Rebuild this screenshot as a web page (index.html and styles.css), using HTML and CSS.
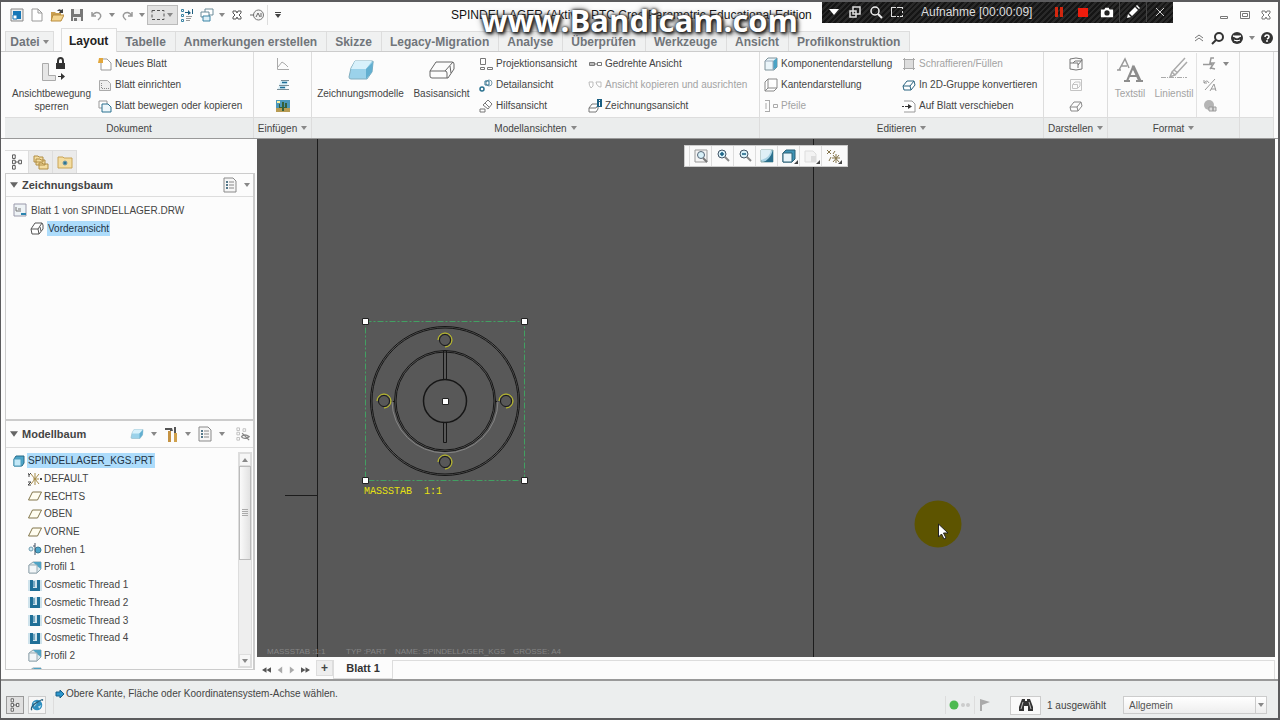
FILE: index.html
```html
<!DOCTYPE html>
<html lang="de">
  <head>
    <meta charset="UTF-8" />
    <meta name="viewport" content="width=device-width, initial-scale=1.0" />
    <title>SPINDELLAGER (Aktiv) - PTC Creo Parametric Educational Edition</title>
    <link rel="stylesheet" href="styles.css">
  </head>
  <body>
    <!-- shared icons -->
    <svg class="sprite" aria-hidden="true">
      <symbol id="caret" viewBox="0 0 6 4"><path d="M0 0h6L3 4z" fill="currentColor" /></symbol>
      <symbol id="plane" viewBox="0 0 14 14"><path d="M4.500 3h9L9.500 11h-9z" fill="#fffdf0" stroke="#81744a" /></symbol>
      <symbol id="profile" viewBox="0 0 14 14">
        <path d="M1 5l4-3h8v7l-4 4H1z" fill="#dce9ee" stroke="#8fa5ae" />
        <path d="M5 2h8v7L9 6z" fill="#4fa3c4" />
        <path d="M1 5h8v8H1z" fill="#f2f6f8" stroke="#9aabb3" />
      </symbol>
      <symbol id="thread" viewBox="0 0 14 14">
        <path d="M0 2h14v11H0z" fill="#cfe3ec" />
        <path d="M2 2h3v8h4V2h3v11H2z" fill="#1f6f97" />
        <path d="M5 4h2M5 6h2M5 8h2" stroke="#1f6f97" />
      </symbol>
      <symbol id="box3d" viewBox="0 0 14 14">
        <path d="M2 5l2-3h8v7l-2 3H2z" fill="#4da5c9" stroke="#276a87" />
        <path d="M2 5h7v7H2z" fill="#c3e8f7" stroke="#4f9dbb" />
      </symbol>
      <symbol id="block" viewBox="0 0 28 22">
        <path d="M8 2h17q2 0 1 2l-1 9-5 7H4q-2 0-2-2l2-9z" fill="#9bd2ea" stroke="#82aebf" />
        <path d="M8 2h17l-6 8H4z" fill="#d8f1fb" />
        <path d="M19 10l7-7-1 10-6 7z" fill="#63afd0" />
      </symbol>
      <symbol id="wireblock" viewBox="0 0 28 22">
        <path d="M8 3h16q2 0 2 2v5l-6 9H4q-2 0-2-2v-5zM2 12h15q2 0 2 2v5M17 12l8-9M22 7l1 7" fill="none" stroke="#666" />
      </symbol>
      <symbol id="wiresmall" viewBox="0 0 14 14">
        <path d="M1 8l4-5h7l1 4-4 5H2zM1 8h7l4-5M8 8l1 4" fill="#fff" stroke="currentColor" />
      </symbol>
      <symbol id="sheetlist" viewBox="0 0 14 16">
        <path d="M1 1h9l3 3v11H1z" fill="#f6f6f6" stroke="#8a8a8a" />
        <path d="M3 5h2M3 8h2M3 11h2" stroke="#55788a" stroke-width="2" />
        <path d="M6 5h5M6 8h5M6 11h5" stroke="#888" />
      </symbol>
      <symbol id="nodes" viewBox="0 0 14 18">
        <path d="M2 1h3v4H2zM2 7h3v4H2zM2 13h3v4H2zM9 7h3v4H9zM5 9h4" fill="#fff" stroke="#444" />
      </symbol>
      <symbol id="cube" viewBox="0 0 14 14">
        <path d="M1 4l3-3h9v9l-3 3H1zM4 1v9h9M4 10l-3 3" fill="#fff" stroke="currentColor" />
      </symbol>
    </svg>

    <header class="titlebar">
      <div class="quick">
        <button title="Fenster"><svg viewBox="0 0 14 14"><path d="M1 1h12v12H1z" fill="#eee" stroke="#888" /><path d="M3 3h8v8H3z" fill="#1777b7" /><path d="M3 7h4v4H3z" fill="#fff" stroke="#1777b7" /></svg></button>
        <button title="Neu"><svg viewBox="0 0 14 14"><path d="M2 1h6l4 4v8H2zM8 1v4h4" fill="#fff" stroke="#999" /></svg></button>
        <button title="Öffnen"><svg viewBox="0 0 14 14"><path d="M1 4h4l1 1h5v8H1z" fill="#c99f51" /><path d="M3 7h11l-3 6H1z" fill="#f3d48e" stroke="#b98c3c" /><path d="M7 3q2-3 4-1l2-1v4H9l1-2" fill="#444" /></svg></button>
        <button title="Speichern"><svg viewBox="0 0 14 14"><path d="M1 1h12v12H1z" fill="#777" /><path d="M4 1h6v5H4zM3 9h8v4H3z" fill="#eee" /><path d="M4 10h3v3H4z" fill="#777" /></svg></button>
        <button title="Rückgängig"><svg viewBox="0 0 14 14"><path d="M2 4v4h4M2 8q3-5 7-3 4 3-1 7" fill="none" stroke="#999" stroke-width="1.500" /></svg></button>
        <svg class="caret"><use href="#caret" /></svg>
        <button title="Wiederholen"><svg viewBox="0 0 14 14"><path d="M12 4v4H8M12 8Q9 3 5 5q-4 3 1 7" fill="none" stroke="#999" stroke-width="1.500" /></svg></button>
        <svg class="caret"><use href="#caret" /></svg>
        <button class="combo" title="Auswahl"><svg viewBox="0 0 14 14"><path d="M1 2.500h12v9H1z" fill="none" stroke="#555" stroke-dasharray="3 2" /></svg><svg class="caret"><use href="#caret" /></svg></button>
        <button title="Regenerieren"><svg viewBox="0 0 14 14"><path d="M1.500 1.500h2v2h-2zM1.500 6.500h2v2h-2zM1.500 11.500h2v2h-2z" fill="none" stroke="#3a84a5" /><path d="M6 8.500h6M6 10.500h5M6 12.500h4" stroke="#999" /><path d="M5 4h3V2l3 3-3 2V5H5zM12 1h1v5h-1z" fill="#205f80" /></svg></button>
        <button title="Fenster wechseln"><svg viewBox="0 0 14 14"><path d="M5 1h8v6H5z" fill="#fff" stroke="#6b8b99" /><path d="M1 4h8v5H1z" fill="#fff" stroke="#6b8b99" /><path d="M3 8h7v5H3z" fill="#dff0f7" stroke="#3a84a5" /></svg></button>
        <svg class="caret"><use href="#caret" /></svg>
        <button title="Schließen"><svg viewBox="0 0 14 14"><path d="M3 3h3l1 2 1-2h3v2L9 7l2 2v2H8L7 9l-1 2H3V9l2-2-2-2z" fill="#fff" stroke="#555" /></svg></button>
        <button title="Anmerkung"><svg viewBox="0 0 14 14"><circle cx="8.500" cy="7" r="5" fill="#f3f3f3" stroke="#777" /><path d="M0 7h4M6 9l2-4 2 4M11 5v4" fill="none" stroke="#666" /></svg></button>
        <button class="more" title="Anpassen"><svg viewBox="0 0 8 8"><path d="M1 1h6v1H1zM1 3h6L4 7z" fill="#444" /></svg></button>
      </div>
      <div class="window-title">SPINDELLAGER (Aktiv) - PTC Creo Parametric Educational Edition</div>
      <div class="window-buttons">
        <button title="Minimieren"><svg viewBox="0 0 12 12"><path d="M2.500 7.500h7v2h-7z" fill="#fff" stroke="#777" /></svg></button>
        <button title="Maximieren"><svg viewBox="0 0 12 12"><path d="M1.500 2.500h9v7h-9zM3.500 4.500h5v3h-5z" fill="#fff" stroke="#777" /></svg></button>
        <button title="Schließen"><svg viewBox="0 0 12 12"><path d="M2 2h3l1 2 1-2h3v2L8 6l2 2v2H7L6 8l-1 2H2V8l2-2-2-2z" fill="#fff" stroke="#777" /></svg></button>
      </div>
      <div class="watermark">www.Bandicam.com</div>
      <div class="recorder">
        <button title="Menü"><svg viewBox="0 0 14 14"><path d="M2 4h10L7 10z" fill="#fff" /></svg></button>
        <button title="Fenster"><svg viewBox="0 0 14 14"><path d="M5 2h7v7H5zM2 6h6v6H2z" fill="none" stroke="#ddd" stroke-width="1.500" /></svg></button>
        <button title="Lupe"><svg viewBox="0 0 14 14"><circle cx="6" cy="6" r="4" fill="none" stroke="#eee" stroke-width="1.500" /><path d="M9 9l4 4" stroke="#eee" stroke-width="2" /></svg></button>
        <button title="Bereich"><svg viewBox="0 0 14 14"><path d="M1 2.500h5M1.500 2v10M1 11.500h5M7 2.500h5M12.500 2v2M12.500 6v2M12.500 10v2M7 11.500h2M10 11.500h3" fill="none" stroke="#ddd" /></svg></button>
        <span class="rec-time">Aufnahme [00:00:09]</span>
        <button title="Pause"><svg viewBox="0 0 14 14"><path d="M3 2h3v10H3zM8 2h3v10H8z" fill="#d3270f" /></svg></button>
        <button title="Stopp"><svg viewBox="0 0 14 14"><path d="M2 3h10v9H2z" fill="#ee1c0c" /></svg></button>
        <button title="Foto"><svg viewBox="0 0 16 14"><path d="M1 4h4l1-2h4l1 2h4v9H1z" fill="#fff" /><circle cx="8" cy="8" r="3" fill="#222" /></svg></button>
        <button class="split" title="Zeichnen"><svg viewBox="0 0 14 14"><path d="M1 13l1-4 3 3zM3 8l6-6 3 3-6 6zM10 1l1-1 3 3-1 1z" fill="#fff" /></svg></button>
        <button class="split" title="Beenden"><svg viewBox="0 0 14 14"><path d="M3 3l8 8M11 3l-8 8" stroke="#ccc" /></svg></button>
      </div>
    </header>

    <nav class="tabs">
      <button class="tab file">Datei<svg class="caret"><use href="#caret" /></svg></button>
      <button class="tab active">Layout</button>
      <button class="tab">Tabelle</button>
      <button class="tab">Anmerkungen erstellen</button>
      <button class="tab">Skizze</button>
      <button class="tab">Legacy-Migration</button>
      <button class="tab">Analyse</button>
      <button class="tab">Überprüfen</button>
      <button class="tab">Werkzeuge</button>
      <button class="tab">Ansicht</button>
      <button class="tab">Profilkonstruktion</button>
      <div class="help">
        <button title="Multifunktionsleiste minimieren"><svg viewBox="0 0 14 14"><path d="M3 7l4-3 4 3M3 10l4-3 4 3" fill="none" stroke="#777" /></svg></button>
        <button title="Suchen"><svg viewBox="0 0 14 14"><circle cx="8" cy="6" r="4" fill="none" stroke="#333" stroke-width="2" /><path d="M5 9l-4 4" stroke="#333" stroke-width="2" /></svg></button>
        <button title="Lernen"><svg viewBox="0 0 14 14"><circle cx="7" cy="7" r="6" fill="#333" /><path d="M3 5h8L7 7zM4 9q3 2 6 0" fill="#fff" stroke="#fff" /></svg></button>
        <svg class="caret"><use href="#caret" /></svg>
        <button title="Hilfe"><svg viewBox="0 0 14 14"><circle cx="7" cy="7" r="6" fill="#333" /><path d="M5 6q0-2 2-2t2 2q0 1-2 2M7 9v2" fill="none" stroke="#fff" stroke-width="1.500" /></svg></button>
      </div>
    </nav>

    <section class="ribbon">
      <div class="group dokument">
        <div class="group-body">
          <button class="big"><svg viewBox="0 0 28 26"><path d="M4.500 6.500h6v12h7v5h-13z" fill="#e6e6e6" stroke="#aaa" /><path d="M18 6h9v6h-9z" fill="#333" /><path d="M20 6V4q0-3 2.500-3T25 4v2" fill="none" stroke="#333" stroke-width="2" /><path d="M20 19.500h4" stroke="#333" /><path d="M23 16l4 3.500-4 3.500z" fill="#333" /></svg>Ansichtbewegung sperren</button>
          <div class="list">
            <button><svg viewBox="0 0 14 14"><path d="M3 2h6l4 4v7H3z" fill="#fff" stroke="#999" /><path d="M1 1h4v5H0z" fill="#e2a73c" /></svg>Neues Blatt</button>
            <button><svg viewBox="0 0 14 14"><path d="M1.500 2.500h8l3 3v7h-11z" fill="#eee" stroke="#aaa" /><path d="M3.500 5v5.500H11" fill="none" stroke="#888" stroke-dasharray="1 1" /></svg>Blatt einrichten</button>
            <button><svg viewBox="0 0 14 14"><path d="M1 2h8v7H1z" fill="#fff" stroke="#999" /><path d="M4 5h6l3 3v5H4z" fill="#eef7fb" stroke="#2a718f" /></svg>Blatt bewegen oder kopieren</button>
          </div>
        </div>
        <div class="group-label">Dokument</div>
      </div>

      <div class="group narrow">
        <div class="group-body">
          <div class="list icons">
            <button title="Diagramm"><svg viewBox="0 0 14 14"><path d="M1.500 1v11.500H13M2 10l4-5 3 2 3 3" fill="none" stroke="#aaa" /></svg></button>
            <button title="Overlay"><svg viewBox="0 0 14 14"><path d="M5 2h8l-2 5H3zM3 8h8l-2 4H1z" fill="#d8eef7" /><path d="M5 2.500h8M3 7.500h10M1 11.500h12" stroke="#7a8d96" /><path d="M6 4.500h5M4 9.500h5" stroke="#1f6f97" stroke-width="1.500" /></svg></button>
            <button title="Bild"><svg viewBox="0 0 14 14"><path d="M0 1h14v12H0z" fill="#4b97ba" /><path d="M0 9h14v4H0z" fill="#b89c54" /><path d="M6 3h2v9H6zM3 5h1v3h5V4h2v5H3z" fill="#35613a" /><path d="M1 2h3v2H1z" fill="#fff2a0" /></svg></button>
          </div>
        </div>
        <div class="group-label">Einfügen<svg class="caret"><use href="#caret" /></svg></div>
      </div>

      <div class="group modell">
        <div class="group-body">
          <button class="big"><svg><use href="#block" /></svg>Zeichnungsmodelle</button>
          <button class="big"><svg><use href="#wireblock" /></svg>Basisansicht</button>
          <div class="list">
            <button><svg viewBox="0 0 14 14"><path d="M1.500 1.500h5v6h-5zM1.500 10.500h4v2h-4zM8.500 10.500h5v2h-5z" fill="#fff" stroke="#777" /></svg>Projektionsansicht</button>
            <button><svg viewBox="0 0 14 14"><circle cx="10" cy="5" r="3" fill="#fff" stroke="#7a9aa8" /><path d="M6 3h4v4H6z" fill="none" stroke="#2a718f" /><circle cx="3" cy="11" r="2" fill="#fff" stroke="#2a718f" stroke-width="1.500" /></svg>Detailansicht</button>
            <button><svg viewBox="0 0 14 14"><path d="M9 1l4 4-4 5-5-4zM1 10h5v3H1zM6 4l4 4" fill="#fff" stroke="#777" /></svg>Hilfsansicht</button>
          </div>
          <div class="list">
            <button><svg viewBox="0 0 14 14"><path d="M1.500 5.500h5v3h-5zM9.500 5.500h4v3h-4zM1 7h6M6 7h3" fill="#fff" stroke="#777" /></svg>Gedrehte Ansicht</button>
            <button disabled><svg viewBox="0 0 14 14"><path d="M1 4h4v4l-2 2q-2-2-2-6zM8 4h5v5q-4 0-5-5z" fill="#fff" stroke="#bbb" /></svg>Ansicht kopieren und ausrichten</button>
            <button><svg viewBox="0 0 14 14"><path d="M1 9l3-4h6v5l-2 3H1zM1 9h7l2-3" fill="#fff" stroke="#777" /><path d="M9 0h5v8H9z" fill="#1c5f82" /><path d="M11 1h1v1h-1zM11 3h1v4h-1z" fill="#fff" /></svg>Zeichnungsansicht</button>
          </div>
        </div>
        <div class="group-label">Modellansichten<svg class="caret"><use href="#caret" /></svg></div>
      </div>

      <div class="group editieren">
        <div class="group-body">
          <div class="list">
            <button><svg viewBox="0 0 14 14"><path d="M1 4l3-3h9v9l-3 3H1z" fill="#eaf5fa" stroke="#7f929a" /><path d="M9 4l4-3v9l-4 3z" fill="#4aa3c5" /><path d="M1 4h8v9" fill="none" stroke="#9ab" /></svg>Komponentendarstellung</button>
            <button class="grey-icon"><svg><use href="#cube" /></svg>Kantendarstellung</button>
            <button disabled><svg viewBox="0 0 14 14"><path d="M1 1.500h5M1 12.500h5M5.500 2v10M2 4v6M9.500 5.500h4v3h-4z" fill="none" stroke="#aaa" /></svg>Pfeile</button>
          </div>
          <div class="list">
            <button disabled><svg viewBox="0 0 14 14"><path d="M3 3h8v8H3z" fill="#ddd" /><path d="M1 2.500h12M1 11.500h12M2.500 1v12M11.500 1v12" stroke="#aaa" /></svg>Schraffieren/Füllen</button>
            <button class="blue-icon"><svg><use href="#wiresmall" /></svg>In 2D-Gruppe konvertieren</button>
            <button><svg viewBox="0 0 14 14"><path d="M2 2h8l3 3v8H2" fill="#fff" stroke="#999" /><path d="M0 7.500h2M3 7.500h4" stroke="#333" /><path d="M6 5l4 2.500L6 10z" fill="#333" /></svg>Auf Blatt verschieben</button>
          </div>
        </div>
        <div class="group-label">Editieren<svg class="caret"><use href="#caret" /></svg></div>
      </div>

      <div class="group darstellen">
        <div class="group-body">
          <div class="list icons">
            <button title="Modellanmerkungen"><svg viewBox="0 0 14 14"><path d="M1 2q6-2 12 0v10q-6 2-12 0zM1 6h8v5M4 6l2-2h6M9 8l4-5" fill="none" stroke="#777" /></svg></button>
            <button title="Ansicht" disabled><svg viewBox="0 0 14 14"><path d="M1.500 1.500h11v11h-11zM3.500 6.500h5v4h-5zM4 6l2-2h5v4l-2 2" fill="none" stroke="#c4c4c4" /></svg></button>
            <button title="Darstellung" class="grey-icon"><svg><use href="#wiresmall" /></svg></button>
          </div>
        </div>
        <div class="group-label">Darstellen<svg class="caret"><use href="#caret" /></svg></div>
      </div>

      <div class="group format">
        <div class="group-body">
          <button class="big" disabled><svg viewBox="0 0 28 26"><path d="M3 13L9 2l4 9M5 9h6M1 13h4" fill="none" stroke="#999" stroke-width="1.500" /><path d="M11 24l6-14 7 14M13 19h9" fill="none" stroke="#8d8d8d" stroke-width="2" /><path d="M17 9l7 15" stroke="#8d8d8d" stroke-width="3" /><path d="M8 24h6M20 24h7" stroke="#8d8d8d" stroke-width="2" /></svg>Textstil</button>
          <button class="big" disabled><svg viewBox="0 0 28 26"><path d="M12 15L25 1M15 18L27 5M12 15l-2 5 5-2zM14 13l4 3" fill="none" stroke="#aaa" stroke-width="1.500" /><path d="M1 20.500h26" stroke="#aaa" stroke-dasharray="5 1 1 1" /></svg>Linienstil</button>
          <div class="list icons ruled">
            <button title="Pfeilstil" disabled><svg viewBox="0 0 14 14"><path d="M0 7.500h9M11 1H8L7 6h4l-4 6M8 11l4 1" fill="none" stroke="#999" stroke-width="1.500" /></svg><svg class="caret"><use href="#caret" /></svg></button>
            <button title="Stil wiederholen" disabled><svg viewBox="0 0 14 14"><path d="M1 2v3h3M1 5q3-4 5 0M2 12L12 1M7 13l4-7 2 7M8 11h5" fill="none" stroke="#999" /></svg></button>
            <button title="Hyperlink" disabled><svg viewBox="0 0 14 14"><circle cx="6" cy="6" r="5" fill="#b5b5b5" /><path d="M6 8h4v4H6zM10 8h3v4h-3z" fill="#ddd" stroke="#999" /></svg></button>
          </div>
        </div>
        <div class="group-label">Format<svg class="caret"><use href="#caret" /></svg></div>
      </div>
      <div class="group rest"><div class="group-body"></div><div class="group-label"></div></div>
    </section>

    <main class="workspace">
      <aside class="sidebar">
        <div class="side-tabs">
          <button class="active" title="Baum"><svg><use href="#nodes" /></svg></button>
          <button title="Ordner"><svg viewBox="0 0 16 16"><path d="M1 2h4l1 1h4v5H1zM3 5h4l1 1h4v5H3zM6 9h3l1 1h5v5H6z" fill="#f4dda0" stroke="#b08d45" /></svg></button>
          <button title="Favoriten"><svg viewBox="0 0 16 16"><path d="M1 3h5l1 1h8v10H1z" fill="#f4dda0" stroke="#c9a456" /><circle cx="8" cy="9" r="2" fill="#2b7892" stroke="#7a9aa8" /></svg></button>
        </div>
        <section class="panel drawing-tree">
          <h2><svg class="fold"><use href="#caret" /></svg>Zeichnungsbaum
            <span class="tools"><button title="Einstellungen"><svg><use href="#sheetlist" /></svg></button><svg class="caret"><use href="#caret" /></svg></span>
          </h2>
          <ul>
            <li><svg viewBox="0 0 14 14"><path d="M1 1h12v12H1z" fill="#eef3f6" stroke="#99a" /><path d="M3 4v4h5M5 6h3" fill="none" stroke="#777" /><path d="M8 11h5" stroke="#2a84b0" stroke-width="2" /></svg><span>Blatt 1 von SPINDELLAGER.DRW</span></li>
            <li class="child"><svg viewBox="0 0 14 14"><path d="M1 8l4-6h7l1 2v4l-4 5H2zM1 8h7l4-6M8 8l1 5M10 6l1 4" fill="#fff" stroke="#555" /></svg><span class="picked">Vorderansicht</span></li>
          </ul>
        </section>
        <section class="panel model-tree">
          <h2><svg class="fold"><use href="#caret" /></svg>Modellbaum
            <span class="tools">
              <button title="Anzeigen"><svg><use href="#block" /></svg></button><svg class="caret"><use href="#caret" /></svg>
              <button title="Werkzeuge"><svg viewBox="0 0 14 16"><path d="M1 2h7l1 3H6v-1H1z" fill="#555" /><path d="M4 5h3v11H4z" fill="#c59343" /><path d="M11 1v6" stroke="#555" stroke-width="2" /><path d="M10 7h3v9h-3z" fill="#d0a14c" /></svg></button><svg class="caret"><use href="#caret" /></svg>
              <button title="Einstellungen"><svg><use href="#sheetlist" /></svg></button><svg class="caret"><use href="#caret" /></svg>
              <button title="Ausblenden"><svg viewBox="0 0 16 16"><path d="M1 1h3v3H1zM1 6h3v3H1zM1 12h3v3H1zM8 2h3v3H8z" fill="none" stroke="#bbb" /><path d="M6 11q4-4 9 0-5 4-9 0M7 7l8 8" fill="none" stroke="#888" stroke-width="1.500" /></svg></button>
            </span>
          </h2>
          <div class="tree-view">
            <ul>
              <li class="root"><svg><use href="#box3d" /></svg><span class="picked">SPINDELLAGER_KGS.PRT</span></li>
              <li><svg viewBox="0 0 14 14"><path d="M3 2l8 10M11 2L3 12M7 1v12M5 7h6" stroke="#a68d4a" /><path d="M0 1l1 2 2-2M1 3v2M0 10h3l-3 3h3M12 6l2 2M14 6l-2 2" fill="none" stroke="#444" /></svg><span>DEFAULT</span></li>
              <li><svg><use href="#plane" /></svg><span>RECHTS</span></li>
              <li><svg><use href="#plane" /></svg><span>OBEN</span></li>
              <li><svg><use href="#plane" /></svg><span>VORNE</span></li>
              <li><svg viewBox="0 0 14 14"><circle cx="3" cy="7" r="2" fill="#cde8f3" stroke="#6f9db0" /><circle cx="10" cy="8" r="3" fill="#4da5c9" stroke="#397b97" /><path d="M7 1v12M5 4h2" stroke="#456" /></svg><span>Drehen 1</span></li>
              <li><svg><use href="#profile" /></svg><span>Profil 1</span></li>
              <li><svg><use href="#thread" /></svg><span>Cosmetic Thread 1</span></li>
              <li><svg><use href="#thread" /></svg><span>Cosmetic Thread 2</span></li>
              <li><svg><use href="#thread" /></svg><span>Cosmetic Thread 3</span></li>
              <li><svg><use href="#thread" /></svg><span>Cosmetic Thread 4</span></li>
              <li><svg><use href="#profile" /></svg><span>Profil 2</span></li>
              <li><svg><use href="#profile" /></svg><span>Profil 3</span></li>
            </ul>
            <div class="scrollbar">
              <button title="Nach oben"><svg class="caret up"><use href="#caret" /></svg></button>
              <div class="thumb"><svg viewBox="0 0 8 10"><path d="M1 1.500h6M1 3.500h6M1 5.500h6M1 7.500h6" stroke="#aaa" /></svg></div>
              <button title="Nach unten"><svg class="caret"><use href="#caret" /></svg></button>
            </div>
          </div>
        </section>
      </aside>

      <div class="sheet">
        <div class="canvas">
          <svg class="drawing">
            <g stroke="#1c1c1c">
              <path d="M28 356.500h33" />
              <line x1="60.500" y1="0" x2="60.500" y2="100%" />
              <line x1="556.500" y1="0" x2="556.500" y2="100%" />
            </g>
            <!-- front view -->
            <g fill="none" stroke="#161616">
              <circle cx="188" cy="262" r="74.500" />
              <circle cx="188" cy="262" r="73" />
              <circle cx="188" cy="262" r="50.500" />
              <circle cx="188" cy="262" r="49" />
              <circle cx="188" cy="262" r="21.500" stroke-width="1.500" />
              <path d="M186.500 212v28.500M189.500 212v28.500M186.500 283.500v20h3v-20M134 262.500h4M238 262.500h4" />
              <circle cx="188" cy="201" r="5.500" />
              <circle cx="188" cy="323" r="5.500" />
              <circle cx="127" cy="262" r="5.500" />
              <circle cx="249" cy="262" r="5.500" />
            </g>
            <path d="M135 262a53 52 0 0 0 106 0" fill="none" stroke="#858585" />
            <g fill="none" stroke="#cccc22">
              <path d="M181 201a7 7 0 1 1 7 7" />
              <path d="M181 323a7 7 0 1 1 7 7" />
              <path d="M120 262a7 7 0 1 1 7 7" />
              <path d="M242 262a7 7 0 1 1 7 7" />
            </g>
            <path d="M108.500 182.500h159v159h-159z" fill="none" stroke="#42a062" stroke-dasharray="6 2 2 2" />
            <g fill="#fff" stroke="#222">
              <path d="M105.500 179.500h6v6h-6zM264.500 179.500h6v6h-6zM105.500 338.500h6v6h-6zM264.500 338.500h6v6h-6zM185.500 259.500h6v6h-6z" />
            </g>
            <text class="scale" x="107" y="355">MASSSTAB  1:1</text>
            <g class="sheet-info">
              <text x="10" y="515">MASSSTAB :1:1</text>
              <text x="89" y="515">TYP :PART</text>
              <text x="138" y="515">NAME: SPINDELLAGER_KGS</text>
              <text x="256" y="515">GRÖSSE: A4</text>
            </g>
            <circle cx="681" cy="385" r="23.500" fill="#5d5400" />
            <path d="M681.500 385v13l3-3 2.500 5 2-1-2.500-5h4.500z" fill="#fff" stroke="#222" />
          </svg>
          <div class="view-tools">
            <button title="Einpassen"><svg viewBox="0 0 14 14"><path d="M1 1h12v12H1z" fill="#f4f4f4" stroke="#999" /><circle cx="7" cy="6" r="3.500" fill="#d8f0f8" stroke="#567" /><path d="M9 9l4 4" stroke="#777" stroke-width="2" /></svg></button>
            <button title="Vergrößern"><svg viewBox="0 0 14 14"><circle cx="6" cy="5" r="4" fill="#d8f0f8" stroke="#456" /><path d="M9 8l4 4" stroke="#888" stroke-width="2" /><path d="M4 5h4M6 3v4" stroke="#175f83" stroke-width="1.500" /></svg></button>
            <button title="Verkleinern"><svg viewBox="0 0 14 14"><circle cx="6" cy="5" r="4" fill="#d8f0f8" stroke="#456" /><path d="M9 8l4 4" stroke="#888" stroke-width="2" /><path d="M4 5h4" stroke="#175f83" stroke-width="1.500" /></svg></button>
            <button title="Aktualisieren"><svg viewBox="0 0 14 14"><path d="M1 1h12v12H1z" fill="#a9d3e4" stroke="#8aa" /><path d="M3 13q7-2 10-12v12z" fill="#2a6f8c" /><path d="M1 1h10q-1 8-10 10z" fill="#dff0f6" /></svg></button>
            <button class="drop" title="Darstellungsstil"><svg viewBox="0 0 14 14"><path d="M1 4l3-3h9v9l-3 3H1z" fill="#3f93b5" stroke="#2b6076" /><path d="M1 4h9v9H1z" fill="#e9f5fa" stroke="#2b6076" /></svg></button>
            <button class="drop" title="Ansichten" disabled><svg viewBox="0 0 14 14"><path d="M1 2h8l3 3v8H1z" fill="#f3f3f3" stroke="#ddd" /><path d="M7 7h5v6H7z" fill="#ddd" /></svg></button>
            <button class="drop" title="Bezüge"><svg viewBox="0 0 14 14"><path d="M1 1l4 4M5 1L1 5M9 2L7 5M5 8l-2 4M7 6l6 7M13 6l-6 7M10 5v9M6 9h8" stroke="#84744a" /></svg></button>
          </div>
        </div>
        <div class="sheet-tabs">
          <button title="Erstes Blatt"><svg viewBox="0 0 10 8"><path d="M5 1v6L0 4zM10 1v6L5 4z" fill="#555" /></svg></button>
          <button title="Vorheriges Blatt"><svg viewBox="0 0 10 8"><path d="M8 0v8L3 4z" fill="#aaa" /></svg></button>
          <button title="Nächstes Blatt"><svg viewBox="0 0 10 8"><path d="M2 0v8l5-4z" fill="#aaa" /></svg></button>
          <button title="Letztes Blatt"><svg viewBox="0 0 10 8"><path d="M0 1v6l5-3zM5 1v6l5-3z" fill="#555" /></svg></button>
          <button class="add" title="Neues Blatt">+</button>
          <button class="sheet-tab">Blatt 1</button>
          <div class="sheet-fill"></div>
        </div>
      </div>
    </main>

    <footer class="status">
      <div class="status-tools">
        <button class="pressed" title="Baum"><svg><use href="#nodes" /></svg></button>
        <button title="Browser"><svg viewBox="0 0 16 16"><circle cx="8" cy="8" r="6" fill="#2e8fc0" /><path d="M4 5q4-2 4 1l-3 4zM9 10l4-2-2 4z" fill="#bfe3ee" /><path d="M2 14Q0 10 8 5t6-2" fill="none" stroke="#275f7c" stroke-width="1.500" /></svg></button>
      </div>
      <p><svg viewBox="0 0 10 10"><path d="M1 3h4V1l4 4-4 4V7H1z" fill="#2c96cc" stroke="#17608a" /></svg>Obere Kante, Fläche oder Koordinatensystem-Achse wählen.</p>
      <div class="lights"><svg viewBox="0 0 22 10"><circle cx="5" cy="5" r="4.500" fill="#4dba50" /><circle cx="14" cy="5" r="2" fill="#ccc" /><circle cx="19" cy="5" r="2" fill="#ccc" /></svg></div>
      <div class="flag"><svg viewBox="0 0 12 14"><path d="M1 1l10 3-8 3v6H1z" fill="#aaa" /></svg></div>
      <button class="find" title="Suchen"><svg viewBox="0 0 16 14"><path d="M4 1h3v2h2V1h3l3 8v4h-5V8H6v5H1V9z" fill="#333" /><path d="M5 4L3 11M11 4l2 7" stroke="#bbb" /></svg></button>
      <span class="count">1 ausgewählt</span>
      <div class="filter">
        <select aria-label="Filter"><option>Allgemein</option></select>
        <span><svg class="caret"><use href="#caret" /></svg></span>
      </div>
    </footer>
  </body>
</html>
```
FILE: styles.css
```css
* {
  box-sizing: border-box;
}
body {
  margin: 0;
  min-height: 100vh;
  display: flex;
  flex-direction: column;
  border: 2px solid #5b5b5d;
  border-left-width: 1px;
  background: #fcfcfc;
  color: #444;
  font-family: "Liberation Sans", Arial, sans-serif;
  font-size: 10px;
}
button {
  display: flex;
  align-items: center;
  justify-content: center;
  padding: 0;
  border: 0;
  background: none;
  color: inherit;
  font: inherit;
}
button:disabled {
  color: #a3a3a3;
}
svg {
  flex: none;
  width: 14px;
  height: 14px;
}
ul {
  list-style: none;
  margin: 0;
  padding: 0;
}
.sprite {
  position: absolute;
  width: 0;
  height: 0;
}
.caret {
  width: 6px;
  height: 4px;
  color: #888;
}

/* title bar */
.titlebar {
  position: relative;
  display: flex;
  align-items: center;
  height: 26px;
}
.quick {
  display: flex;
  align-items: center;
  flex: 0 0 450px;
  padding-left: 6px;
}
.quick button {
  width: 20px;
  height: 20px;
}
.quick .caret {
  margin: 0 2px;
}
.quick .combo {
  width: 31px;
  background: #e2e2e2;
  border: 1px solid #bbb;
  margin: 0 -1px 0 0;
}
.quick .more {
  border-left: 1px solid #ddd;
}
.more svg {
  width: 8px;
  height: 8px;
}
.window-title {
  flex: 1;
  font-size: 12px;
  color: #111;
  white-space: nowrap;
}
.window-buttons {
  display: flex;
  gap: 9px;
  padding-right: 6px;
}
.window-buttons svg {
  width: 12px;
  height: 12px;
}
.watermark {
  position: absolute;
  top: 5px;
  left: 0;
  right: 0;
  text-align: center;
  font: bold 31px/26px "Open Sans", sans-serif;
  color: #fff;
  text-shadow: 0 0 3px #222, 1px 1px 3px #222, 2px 2px 4px #333, 0 0 6px #555;
}
.recorder {
  position: absolute;
  top: -2px;
  right: 105px;
  width: 351px;
  height: 23px;
  display: flex;
  align-items: center;
  padding-left: 1px;
  background: repeating-linear-gradient(135deg, #151515 0 2px, #292929 2px 4px);
  color: #ddd;
}
.recorder button {
  width: 21px;
  height: 20px;
}
.rec-time {
  flex: 1;
  font-size: 12px;
  padding-left: 14px;
}
.rec-time ~ button {
  width: 24px;
}
.recorder .split {
  width: 27px;
  border-left: 1px solid #444;
}

/* ribbon tabs */
.tabs {
  display: flex;
  align-items: flex-end;
  height: 24px;
  padding: 0 4px;
  border-bottom: 1px solid #ccc;
}
.tab {
  height: 20px;
  padding: 0 9px 0 8px;
  border: 1px solid #ddd;
  border-width: 1px 1px 0 0;
  background: #f0f1f1;
  color: #70757a;
  font-size: 12px;
  font-weight: bold;
}
.tab.file {
  width: 49px;
  padding: 0;
  margin-right: 7px;
  border-left-width: 1px;
}
.file .caret {
  margin-left: 3px;
}
.tab.active {
  height: 24px;
  padding: 0 8px 0 7px;
  margin-bottom: -1px;
  border-left-width: 1px;
  background: #fcfcfc;
  color: #222;
}
.help {
  display: flex;
  align-items: center;
  gap: 5px;
  height: 26px;
  margin-left: auto;
}

/* ribbon */
.ribbon {
  display: flex;
  height: 87px;
  padding: 0 4px;
  border-bottom: 1px solid #999;
}
.group {
  display: flex;
  flex-direction: column;
  border-right: 1px solid #ddd;
}
.group-body {
  flex: 1;
  display: grid;
  padding-top: 1px;
}
.group-label {
  display: flex;
  align-items: center;
  justify-content: center;
  gap: 4px;
  height: 21px;
  background: #ebeded;
  border-top: 1px solid #ddd;
}
.dokument {
  width: 249px;
}
.dokument .group-body {
  grid-template-columns: 93px 1fr;
}
.narrow {
  width: 58px;
}
.modell {
  width: 448px;
}
.modell .group-body {
  grid-template-columns: 97px 70px 109px 1fr;
}
.modell .big:nth-child(2) {
  padding-right: 5px;
}
.editieren {
  width: 284px;
}
.editieren .group-body {
  grid-template-columns: 138px 1fr;
}
.darstellen {
  width: 64px;
}
.format {
  width: 132px;
}
.format .group-body {
  grid-template-columns: 44px 44px 1fr;
}
.editieren .list {
  padding-left: 4px;
}
.rest {
  flex: 1;
}
.big {
  flex-direction: column;
  justify-content: flex-start;
  padding-top: 4px;
  line-height: 13px;
}
.big svg {
  width: 28px;
  height: 26px;
  margin-bottom: 4px;
}
.list {
  display: grid;
  grid-template-rows: repeat(3, 21px);
}
.list button {
  justify-content: flex-start;
  gap: 3px;
  white-space: nowrap;
}
.icons button {
  justify-content: center;
}
.ruled {
  border-left: 1px solid #e2e2e2;
}
.ruled button {
  justify-content: flex-start;
  padding-left: 6px;
  gap: 6px;
}
.grey-icon svg {
  color: #888;
}
.blue-icon svg {
  color: #2a6480;
}

/* workspace */
.workspace {
  flex: 1;
  display: flex;
  min-height: 0;
}
.sidebar {
  flex: 0 0 256px;
  display: flex;
  flex-direction: column;
  padding: 11px 2px 9px 4px;
}
.side-tabs {
  display: flex;
}
.side-tabs button {
  width: 24px;
  height: 23px;
  background: #ebebeb;
  border: 1px solid #ddd;
  border-width: 1px 1px 0 0;
}
.side-tabs .active {
  background: #fcfcfc;
}
.side-tabs svg {
  width: 16px;
  height: 16px;
}
.panel {
  border: 1px solid #ccc;
  border-right: 2px solid #ccc;
}
.panel h2 {
  display: flex;
  align-items: center;
  height: 23px;
  margin: 0;
  padding: 0 3px 0 4px;
  border-bottom: 1px solid #ddd;
  font-size: 11px;
}
.fold {
  width: 8px;
  height: 6px;
  margin-right: 4px;
  color: #666;
}
.tools {
  display: flex;
  align-items: center;
  gap: 7px;
  margin-left: auto;
}
.tools svg {
  height: 16px;
}
.tools .caret {
  height: 4px;
}
.model-tree .tools button:last-child {
  margin-left: 4px;
}
.panel li {
  display: flex;
  align-items: center;
  gap: 2px;
  white-space: nowrap;
}
.picked {
  background: #addcfb;
  padding: 2px 1px;
  margin-left: -1px;
  color: #234;
}
.drawing-tree {
  flex: 0 0 247px;
}
.drawing-tree ul {
  padding: 4px 0 0 7px;
}
.drawing-tree li {
  height: 18px;
  gap: 4px;
}
.drawing-tree .child {
  padding-left: 17px;
}
.model-tree {
  flex: 1 1 0;
  min-height: 0;
  display: flex;
  flex-direction: column;
}
.model-tree h2 {
  flex: 0 0 27px;
}
.tree-view {
  flex: 1;
  min-height: 0;
  display: flex;
  overflow: hidden;
}
.tree-view ul {
  flex: 1;
  display: grid;
  grid-auto-rows: 1fr;
  height: 230px;
  margin-top: 4px;
  padding-left: 22px;
}
.tree-view .root {
  margin-left: -16px;
}
.scrollbar {
  display: flex;
  flex-direction: column;
  justify-content: space-between;
  width: 14px;
  margin: 4px 1px 1px 0;
  background: #eee;
  border: 1px solid #ddd;
}
.scrollbar button {
  height: 13px;
  background: #f6f6f6;
  border: 1px solid #ddd;
}
.up {
  rotate: 180deg;
}
.thumb {
  display: flex;
  align-items: center;
  justify-content: center;
  height: 94px;
  margin-bottom: auto;
  border: 1px solid #bbb;
  background: linear-gradient(90deg, #fafafa, #e2e2e2);
}
.thumb svg {
  width: 8px;
  height: 10px;
}

/* drawing sheet */
.sheet {
  flex: 1;
  display: flex;
  flex-direction: column;
  padding-right: 3px;
}
.canvas {
  position: relative;
  flex: 1;
  background: #585858;
}
.drawing {
  position: absolute;
  width: 100%;
  height: 100%;
}
.scale {
  font: 10px "Liberation Mono", monospace;
  fill: #e6e010;
  white-space: pre;
}
.sheet-info {
  font-size: 8px;
  fill: #858585;
}
.view-tools {
  position: absolute;
  top: 6px;
  left: 50%;
  transform: translateX(-50%);
  display: flex;
  height: 22px;
  padding: 0 4px;
  background: #fafafa;
  border: 1px solid #ccc;
}
.view-tools button {
  position: relative;
  width: 22px;
  border-left: 1px solid #ddd;
}
.drop::after {
  content: "";
  position: absolute;
  right: 1px;
  bottom: 2px;
  border: 2px solid #444;
  border-left-color: transparent;
  border-top-color: transparent;
}
.sheet-tabs {
  display: flex;
  height: 22px;
  padding: 3px 0 0 3px;
}
.sheet-tabs button {
  width: 13px;
}
.sheet-tabs svg {
  width: 9px;
  height: 8px;
}
.sheet-tabs .add {
  width: 17px;
  height: 16px;
  margin-left: 4px;
  background: #eee;
  border: 1px solid #ddd;
  font-size: 12px;
  font-weight: bold;
}
.sheet-tabs .sheet-tab {
  width: 60px;
  padding-bottom: 2px;
  border: 1px solid #ddd;
  border-top: 0;
  color: #333;
  font-size: 11px;
  font-weight: bold;
}
.sheet-fill {
  flex: 1;
  border: 1px solid #ddd;
  border-width: 1px 1px 0 0;
}

/* status bar */
.status {
  display: flex;
  align-items: center;
  height: 39px;
  padding: 11px 11px 0 5px;
  border-top: 2px solid #999;
  background: #eceeee;
}
.status-tools {
  display: flex;
  gap: 4px;
  padding-right: 7px;
  border-right: 1px solid #ddd;
}
.status-tools button {
  width: 18px;
  height: 18px;
  border: 1px solid #ccc;
  background: #f6f6f6;
}
.status-tools .pressed {
  border-color: #999;
  background: #e0e0e0;
}
.status p {
  flex: 1;
  align-self: flex-start;
  display: flex;
  align-items: center;
  gap: 1px;
  margin: -4px 0 0;
  padding-left: 1px;
}
.status p svg {
  width: 10px;
  height: 10px;
}
.lights {
  display: flex;
  padding: 4px 3px;
  border: 1px solid #ddd;
  border-width: 0 1px;
}
.lights svg {
  width: 22px;
  height: 10px;
}
.flag {
  display: flex;
  width: 35px;
  padding-left: 3px;
}
.find {
  width: 31px;
  height: 19px;
  border: 1px solid #ccc;
  background: #fafafa;
}
.find svg {
  width: 16px;
}
.count {
  width: 82px;
  padding-left: 6px;
}
.filter {
  position: relative;
  width: 144px;
}
.filter select {
  appearance: none;
  width: 100%;
  height: 18px;
  padding: 0 5px;
  border: 1px solid #ccc;
  border-radius: 0;
  background: linear-gradient(#fff, #eee);
  color: #555;
  font: inherit;
}
.filter span {
  position: absolute;
  top: 1px;
  right: 1px;
  bottom: 1px;
  width: 11px;
  display: flex;
  align-items: center;
  justify-content: center;
  border-left: 1px solid #ccc;
  pointer-events: none;
}
```
